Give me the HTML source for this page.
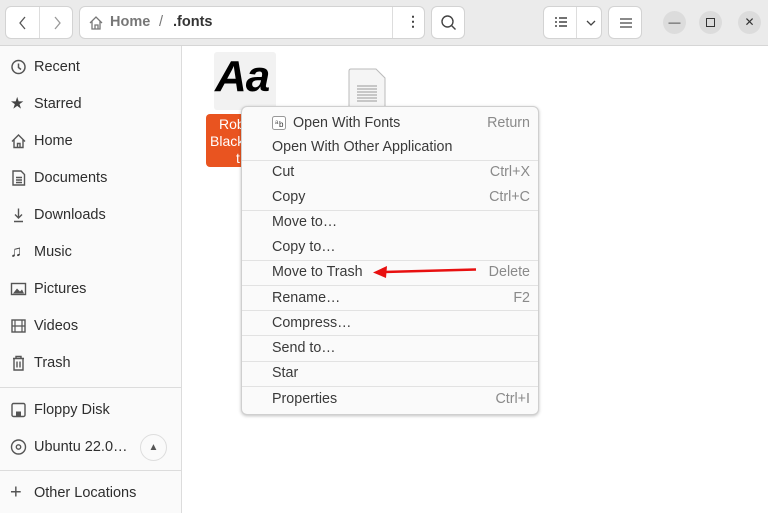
<!DOCTYPE html>
<html><head><style>
*{margin:0;padding:0;box-sizing:border-box}
body{width:768px;height:513px;overflow:hidden;font-family:"Liberation Sans",sans-serif;background:#fff;position:relative;color:#2e2e2e}
.hdr{position:absolute;left:0;top:0;width:768px;height:46px;background:#ebebeb;border-bottom:1px solid #d6d6d6}
.btn{position:absolute;background:#fff;border:1px solid #d3d3d3;border-radius:6px;top:6px;height:33px}
.side{position:absolute;left:0;top:46px;width:182px;height:467px;background:#fafafa;border-right:1px solid #dcdcdc}
.si{position:absolute;left:34px;font-size:14.5px;color:#2e2e2e;transform:translateY(-50%)}
.ic{position:absolute;left:10px;width:17px;height:17px;transform:translateY(-50%)}
.sep{position:absolute;left:0;width:181px;height:1px;background:#dcdcdc}
.menu{position:absolute;left:241px;top:106px;width:298px;height:309px;background:#fafafa;border:1px solid #cfcfcf;border-radius:6px;box-shadow:0 1px 3px rgba(0,0,0,.25)}
.mi{position:absolute;left:30px;font-size:14.3px;color:#3a3a3a;transform:translateY(-50%)}
.mk{position:absolute;right:8px;font-size:14.3px;color:#8a8a8a;transform:translateY(-50%)}
.ms{position:absolute;left:0;width:296px;height:1px;background:#e2e2e2}
.wc{position:absolute;top:11px;width:23px;height:23px;border-radius:50%;background:#dcdcdc;font-size:12px;text-align:center;line-height:23px;color:#333}
.ot{position:absolute;color:#fff;font-size:14px;white-space:nowrap}
</style></head><body>
<div class="hdr">
 <div class="btn" style="left:5px;width:68px"><div style="position:absolute;left:33px;top:0;width:1px;height:31px;background:#ddd"></div>
  <svg style="position:absolute;left:11px;top:8px" width="12" height="16"><path d="M8 2 L3 8 L8 14" fill="none" stroke="#555" stroke-width="1.3"/></svg>
  <svg style="position:absolute;left:45px;top:8px" width="12" height="16"><path d="M4 2 L9 8 L4 14" fill="none" stroke="#999" stroke-width="1.3"/></svg></div>
 <div class="btn" style="left:79px;width:346px">
  <svg style="position:absolute;left:8px;top:8px" width="16" height="16"><path d="M2 8 L8 2 L14 8 M4 6 V14 H12 V6 M7 14 V10 H10 V14" fill="none" stroke="#777" stroke-width="1.3"/></svg>
  <span style="position:absolute;left:30px;top:7px;font-size:14.5px;font-weight:bold;color:#777">Home</span>
  <span style="position:absolute;left:79px;top:7px;font-size:14.5px;color:#777">/</span>
  <span style="position:absolute;left:93px;top:7px;font-size:14.5px;font-weight:bold;color:#333">.fonts</span>
  <div style="position:absolute;left:312px;top:0;width:1px;height:31px;background:#ddd"></div>
  <span style="position:absolute;left:326px;top:6px;font-size:14px;color:#444;font-weight:bold">&#8942;</span></div>
 <div class="btn" style="left:431px;width:34px"><svg style="position:absolute;left:8px;top:7px" width="18" height="18"><circle cx="7.5" cy="7.5" r="5.5" fill="none" stroke="#444" stroke-width="1.4"/><path d="M11.5 11.5 L15.5 15.5" stroke="#444" stroke-width="1.4"/></svg></div>
 <div class="btn" style="left:543px;width:59px"><div style="position:absolute;left:32px;top:0;width:1px;height:31px;background:#ddd"></div>
  <svg style="position:absolute;left:10px;top:9px" width="14" height="14"><path d="M1 2h2M1 6h2M1 10h2M5 2h8M5 6h8M5 10h8" stroke="#444" stroke-width="1.5"/></svg>
  <svg style="position:absolute;left:41px;top:11px" width="12" height="10"><path d="M2 3 L6 7 L10 3" fill="none" stroke="#444" stroke-width="1.3"/></svg></div>
 <div class="btn" style="left:608px;width:34px"><svg style="position:absolute;left:10px;top:9px" width="14" height="14"><path d="M1 3h12M1 7h12M1 11h12" stroke="#444" stroke-width="1.3"/></svg></div>
 <div class="wc" style="left:663px">&#8212;</div>
 <div class="wc" style="left:699px"><div style="position:absolute;left:7px;top:7px;width:9px;height:9px;border:1.3px solid #333"></div></div>
 <div class="wc" style="left:738px">&#10005;</div>
</div>
<div class="side">
 <svg class="ic" style="top:21px"><circle cx="8.5" cy="8.5" r="6.5" fill="none" stroke="#555" stroke-width="1.5"/><path d="M8.5 5v4l2.5 2" fill="none" stroke="#555" stroke-width="1.5"/></svg><div class="si" style="top:21px">Recent</div>
 <div class="ic" style="top:58px;font-size:16px;color:#444;line-height:17px">&#9733;</div><div class="si" style="top:58px">Starred</div>
 <svg class="ic" style="top:95px"><path d="M2 9 L8.5 2.5 L15 9 M4 7 V15 H13 V7 M7.5 15 V11 H10 V15" fill="none" stroke="#555" stroke-width="1.4"/></svg><div class="si" style="top:95px">Home</div>
 <svg class="ic" style="top:132px"><path d="M3 1.5 H11 L14.5 5 V15.5 H3 Z M6 8h6M6 10.5h6M6 13h6" fill="none" stroke="#555" stroke-width="1.4"/></svg><div class="si" style="top:132px">Documents</div>
 <svg class="ic" style="top:169px"><path d="M8.5 2 V11 M5 8 L8.5 11.5 L12 8 M4 15h9" fill="none" stroke="#555" stroke-width="1.4"/></svg><div class="si" style="top:169px">Downloads</div>
 <div class="ic" style="top:206px;font-size:16px;color:#444;line-height:17px">&#9835;</div><div class="si" style="top:206px">Music</div>
 <svg class="ic" style="top:243px"><rect x="1.5" y="3" width="14" height="11" fill="none" stroke="#555" stroke-width="1.4"/><path d="M3 13 L7 8 L10 11 L12 9 L14 13Z" fill="#555"/></svg><div class="si" style="top:243px">Pictures</div>
 <svg class="ic" style="top:280px"><rect x="2" y="2.5" width="13" height="12" fill="none" stroke="#555" stroke-width="1.4"/><path d="M5 2.5v12M12 2.5v12M2 8.5h13" stroke="#555" stroke-width="1.2"/></svg><div class="si" style="top:280px">Videos</div>
 <svg class="ic" style="top:317px"><path d="M3 4h11M6 4V2h5v2M4 4.5V15.5H13V4.5M7 7v6M10 7v6" fill="none" stroke="#555" stroke-width="1.4"/></svg><div class="si" style="top:317px">Trash</div>
 <div class="sep" style="top:341px"></div>
 <svg class="ic" style="top:364px"><rect x="2" y="2" width="13" height="13" rx="1.5" fill="none" stroke="#555" stroke-width="1.4"/><rect x="6" y="10" width="5" height="5" fill="#555"/></svg><div class="si" style="top:364px">Floppy Disk</div>
 <svg class="ic" style="top:401px"><circle cx="8.5" cy="8.5" r="7" fill="none" stroke="#555" stroke-width="1.4"/><circle cx="8.5" cy="8.5" r="2.2" fill="none" stroke="#555" stroke-width="1.4"/></svg><div class="si" style="top:401px">Ubuntu 22.0…</div>
 <div style="position:absolute;left:140px;top:388px;width:27px;height:27px;border-radius:50%;border:1px solid #ddd;text-align:center;line-height:25px;font-size:10px;color:#555">&#9650;</div>
 <div class="sep" style="top:424px"></div>
 <div class="ic" style="top:447px;font-size:20px;color:#555;line-height:17px">+</div><div class="si" style="top:447px">Other Locations</div>
</div>
<div style="position:absolute;left:214px;top:52px;width:62px;height:58px;background:#f2f2f2;border-radius:3px"></div>
<div style="position:absolute;left:215px;top:52px;font-size:44px;font-weight:bold;font-style:italic;color:#000;letter-spacing:-1px">Aa</div>
<div style="position:absolute;left:206px;top:114px;width:70px;height:53px;background:#e95420;border-radius:4px;overflow:hidden">
 <span class="ot" style="left:13px;top:2px">Roboto</span>
 <span class="ot" style="left:4px;top:19px">Black.ttf</span>
 <span class="ot" style="left:30px;top:36px">t</span>
</div>
<svg style="position:absolute;left:348px;top:68px" width="40" height="42"><path d="M1 3 Q1 1 3 1 H28 L37 10 V41 H1Z" fill="#f5f5f5" stroke="#bbb"/><path d="M9 18h20M9 21h20M9 24h20M9 27h20M9 30h20M9 33h20" stroke="#999"/></svg>
<div class="menu">
 <svg style="position:absolute;left:30px;top:9px" width="14" height="14"><rect x=".5" y=".5" width="13" height="13" rx="2" fill="#fff" stroke="#999"/><text x="3" y="8" font-size="6" fill="#555" font-family="Liberation Sans">a</text><text x="7" y="11" font-size="8" fill="#333" font-family="Liberation Sans">b</text></svg>
 <div class="mi" style="top:16px;left:51px">Open With Fonts</div><div class="mk" style="top:16px">Return</div>
 <div class="mi" style="top:40px">Open With Other Application</div>
 <div class="ms" style="top:53px"></div>
 <div class="mi" style="top:65px">Cut</div><div class="mk" style="top:65px">Ctrl+X</div>
 <div class="mi" style="top:90px">Copy</div><div class="mk" style="top:90px">Ctrl+C</div>
 <div class="ms" style="top:103px"></div>
 <div class="mi" style="top:115px">Move to…</div>
 <div class="mi" style="top:140px">Copy to…</div>
 <div class="ms" style="top:153px"></div>
 <div class="mi" style="top:165px">Move to Trash</div><div class="mk" style="top:165px">Delete</div>
 <div class="ms" style="top:178px"></div>
 <div class="mi" style="top:191px">Rename…</div><div class="mk" style="top:191px">F2</div>
 <div class="ms" style="top:203px"></div>
 <div class="mi" style="top:216px">Compress…</div>
 <div class="ms" style="top:228px"></div>
 <div class="mi" style="top:241px">Send to…</div>
 <div class="ms" style="top:254px"></div>
 <div class="mi" style="top:266px">Star</div>
 <div class="ms" style="top:279px"></div>
 <div class="mi" style="top:292px">Properties</div><div class="mk" style="top:292px">Ctrl+I</div>
</div>
<svg style="position:absolute;left:370px;top:262px" width="110" height="18"><path d="M106 7.5 L14 10" stroke="#e81010" stroke-width="2.5"/><path d="M3 10.5 L17 4 L16 16Z" fill="#e81010"/></svg>
</body></html>
